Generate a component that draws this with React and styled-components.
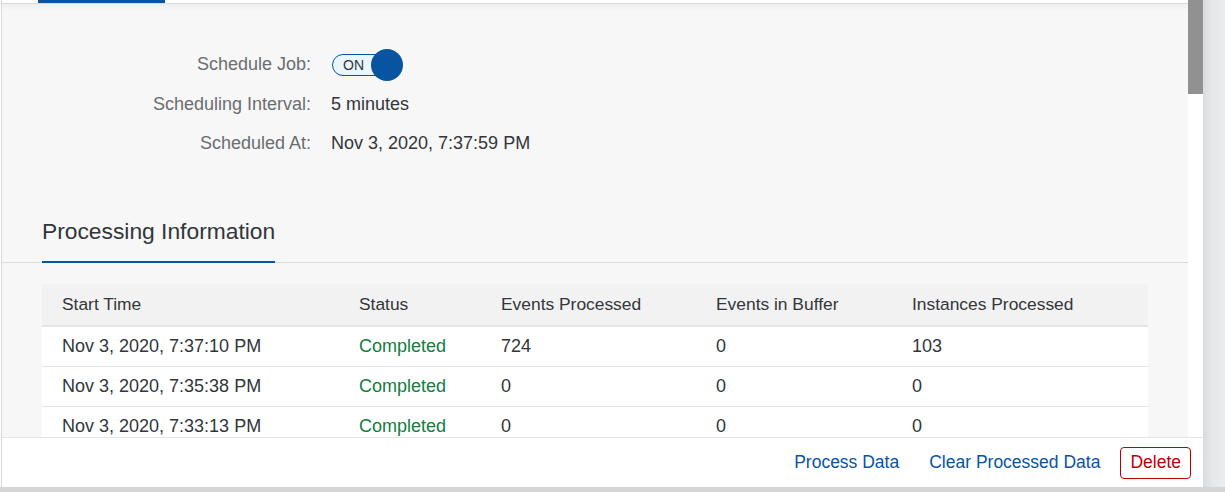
import React from 'react';
import styled, { createGlobalStyle } from 'styled-components';

const GlobalStyle = createGlobalStyle`
    html, body {
        margin: 0;
        padding: 0;
        background: #ffffff;
        font-family: "Liberation Sans", Arial, sans-serif;
        color: #32363a;
    }
`

const Page = styled.div`
    width: 1225px;
    height: 492px;
    display: flex;
    flex-direction: column;
    overflow: hidden;
`

const Frame = styled.div`
    height: 487px;
    display: flex;
`

const BottomEdge = styled.div`
    height: 5px;
    background: #d5d5d5;
`

const Dialog = styled.div`
    width: 1201px;
    margin-left: 1px;
    border-left: 1px solid #d9d9d9;
    display: flex;
    flex-direction: column;
    background: #ffffff;
`

const SideShade = styled.div`
    flex: 1;
    background: linear-gradient(to right, #d9dcdd, #e6e8e9 45%, #ebeced);
`

const Main = styled.div`
    height: 437px;
    display: flex;
`

const ContentColumn = styled.div`
    flex: 1;
    display: flex;
    flex-direction: column;
    min-width: 0;
`

const TabStrip = styled.div`
    height: 3px;
    border-bottom: 1px solid #d9d9d9;
    position: relative;
    z-index: 1;
    box-shadow: 0 2px 6px rgba(0, 0, 0, 0.07);
    background: #ffffff;
`

const TabIndicator = styled.div`
    margin-left: 36px;
    width: 127px;
    height: 3px;
    background: #0854a0;
`

const Body = styled.div`
    flex: 1;
    background: #f7f7f7;
    overflow: hidden;
`

const Scrollbar = styled.div`
    width: 15px;
    background: #ffffff;
`

const Thumb = styled.div`
    height: 94px;
    background: #919191;
`

const Form = styled.div`
    display: grid;
    grid-template-columns: 309px auto;
    grid-auto-rows: 39.5px;
    column-gap: 20px;
    padding-top: 41px;
    font-size: 18px;
`

const Label = styled.div`
    display: flex;
    align-items: center;
    justify-content: flex-end;
    color: #6a6d70;
`

const Value = styled.div`
    display: flex;
    align-items: center;
    color: #32363a;
`

const Switch = styled.div`
    position: relative;
    width: 71px;
    height: 32px;
    margin-left: 1px;
    display: flex;
    align-items: center;
`

const Track = styled.div`
    width: 58px;
    height: 22px;
    border: 1px solid #0854a0;
    border-radius: 12px;
    background: #ebf5fe;
    display: flex;
    align-items: center;
    padding-left: 10px;
    box-sizing: border-box;
    font-size: 14px;
    color: #32363a;
`

const Knob = styled.div`
    position: absolute;
    right: 0;
    top: 0;
    width: 32px;
    height: 32px;
    border-radius: 50%;
    background: #0854a0;
`

const TitleBar = styled.div`
    padding: 52px 0 0 40px;
    border-bottom: 1px solid #dcdcdc;
`

const Title = styled.div`
    display: inline-block;
    font-size: 22.8px;
    line-height: 30px;
    padding-bottom: 15px;
    border-bottom: 2px solid #0854a0;
    margin-bottom: -1px;
    color: #32363a;
`

const TableWrap = styled.div`
    padding: 21px 40px 0 40px;
`

const Table = styled.table`
    width: 100%;
    border-collapse: collapse;
    table-layout: fixed;
    background: #ffffff;
    font-size: 18px;
`

const Th = styled.th`
    height: 41px;
    padding: 0 0 0 20px;
    text-align: left;
    font-weight: normal;
    font-size: 17.4px;
    background: #f2f2f2;
    border-bottom: 2px solid #e5e5e5;
    color: #32363a;
`

const Td = styled.td`
    height: 39px;
    padding: 0 0 0 20px;
    border-bottom: 1px solid #e5e5e5;
    color: ${props => props.status ? '#107e3e' : '#32363a'};
`

const Footer = styled.div`
    height: 49px;
    border-top: 1px solid #e5e5e5;
    display: flex;
    align-items: center;
    justify-content: flex-end;
    gap: 10px;
    padding-right: 12px;
`

const LinkButton = styled.button`
    background: none;
    border: none;
    padding: 0 10px;
    height: 32px;
    font-family: "Liberation Sans", Arial, sans-serif;
    font-size: 17.5px;
    color: #0854a0;
    cursor: pointer;
`

const DeleteButton = styled.button`
    background: #ffffff;
    border: 1px solid #bb0000;
    border-radius: 4px;
    padding: 0 9px;
    height: 32px;
    font-family: "Liberation Sans", Arial, sans-serif;
    font-size: 17.5px;
    color: #bb0000;
    cursor: pointer;
`

const columns = [
    { title: 'Start Time', width: 297, key: 'start' },
    { title: 'Status', width: 142, key: 'status' },
    { title: 'Events Processed', width: 215, key: 'events' },
    { title: 'Events in Buffer', width: 196, key: 'buffer' },
    { title: 'Instances Processed', key: 'instances' }
]

const runs = [
    { start: 'Nov 3, 2020, 7:37:10 PM', status: 'Completed', events: '724', buffer: '0', instances: '103' },
    { start: 'Nov 3, 2020, 7:35:38 PM', status: 'Completed', events: '0', buffer: '0', instances: '0' },
    { start: 'Nov 3, 2020, 7:33:13 PM', status: 'Completed', events: '0', buffer: '0', instances: '0' }
]

const App = () => {
    return (
        <Page>
            <GlobalStyle />
            <Frame>
                <Dialog>
                    <Main>
                        <ContentColumn>
                            <TabStrip>
                                <TabIndicator />
                            </TabStrip>
                            <Body>
                                <Form>
                                    <Label>Schedule Job:</Label>
                                    <Value>
                                        <Switch>
                                            <Track>ON</Track>
                                            <Knob />
                                        </Switch>
                                    </Value>
                                    <Label>Scheduling Interval:</Label>
                                    <Value>5 minutes</Value>
                                    <Label>Scheduled At:</Label>
                                    <Value>Nov 3, 2020, 7:37:59 PM</Value>
                                </Form>
                                <TitleBar>
                                    <Title>Processing Information</Title>
                                </TitleBar>
                                <TableWrap>
                                    <Table>
                                        <colgroup>
                                            {columns.map(col => <col key={col.key} style={col.width ? { width: col.width } : null} />)}
                                        </colgroup>
                                        <thead>
                                            <tr>
                                                {columns.map(col => <Th key={col.key}>{col.title}</Th>)}
                                            </tr>
                                        </thead>
                                        <tbody>
                                            {runs.map((run, i) => (
                                                <tr key={i}>
                                                    {columns.map(col => (
                                                        <Td key={col.key} status={col.key === 'status'}>{run[col.key]}</Td>
                                                    ))}
                                                </tr>
                                            ))}
                                        </tbody>
                                    </Table>
                                </TableWrap>
                            </Body>
                        </ContentColumn>
                        <Scrollbar>
                            <Thumb />
                        </Scrollbar>
                    </Main>
                    <Footer>
                        <LinkButton>Process Data</LinkButton>
                        <LinkButton>Clear Processed Data</LinkButton>
                        <DeleteButton>Delete</DeleteButton>
                    </Footer>
                </Dialog>
                <SideShade />
            </Frame>
            <BottomEdge />
        </Page>
    );
}

export default App;
